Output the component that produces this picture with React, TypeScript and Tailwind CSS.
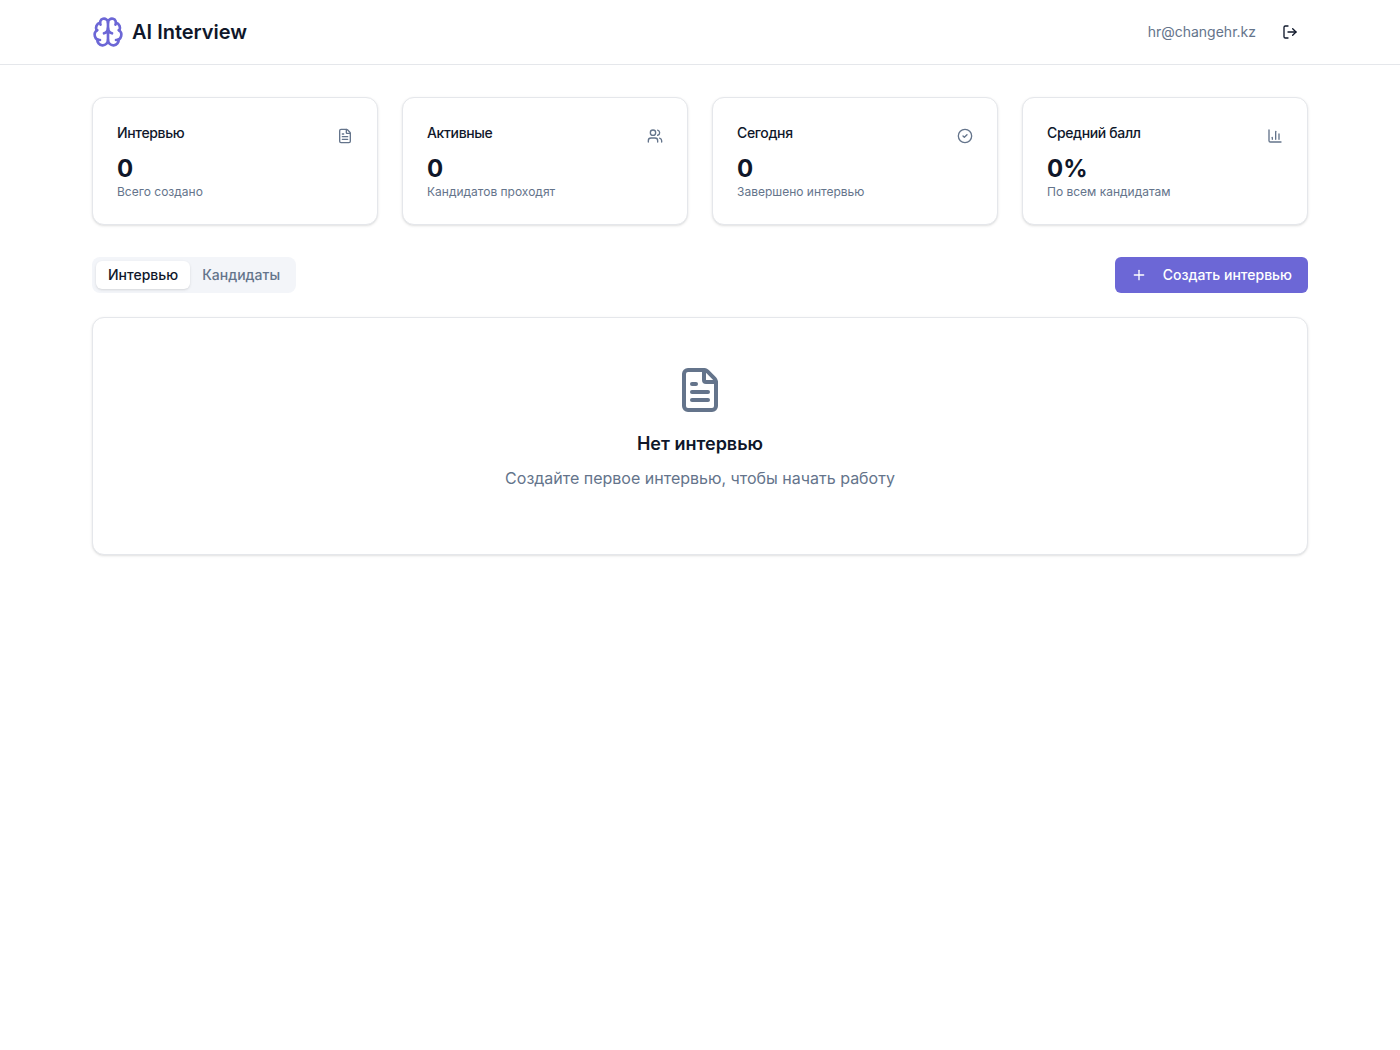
import { Brain, ChartColumn, CircleCheck, FileText, LogOut, Plus, Users } from "lucide-react"
import type { ReactNode } from "react"

interface StatProps { title: string; value: string; sub: string; icon: ReactNode }

function StatCard({ title, value, sub, icon }: StatProps) {
  return (
    <div className="h-[128px] rounded-xl border border-[#e5e7eb] bg-white px-6 pt-[25px] shadow-sm">
      <div className="flex items-start justify-between">
        <h3 className="text-sm leading-[20px] font-medium tracking-tight text-[#0f172a]">{title}</h3>
        <div className="mt-[5px]">{icon}</div>
      </div>
      <div className="mt-[11px] text-2xl leading-[28px] font-bold text-[#0f172a]">{value}</div>
      <p className="mt-px text-xs leading-[16px] text-[#64748b]">{sub}</p>
    </div>
  )
}

export default function App() {
  const ic = "h-4 w-4 text-[#64748b]"
  return (
    <div className="min-h-screen bg-white font-['Inter','Liberation_Sans',sans-serif] antialiased">
      <header className="border-b border-[#e5e7eb]">
        <div className="mx-auto flex h-16 max-w-7xl items-center justify-between px-8">
          <div className="flex items-center gap-2">
            <Brain className="h-8 w-8 text-[#6c67d6]" />
            <span className="text-xl font-semibold text-[#0f172a]">AI Interview</span>
          </div>
          <div className="flex items-center gap-4">
            <span className="text-sm text-[#64748b]">hr@changehr.kz</span>
            <button className="flex h-9 w-9 items-center justify-center text-[#0f172a]"><LogOut className="h-4 w-4" /></button>
          </div>
        </div>
      </header>
      <main className="mx-auto max-w-7xl px-8 py-8">
        <div className="grid grid-cols-4 gap-6">
          <StatCard title="Интервью" value="0" sub="Всего создано" icon={<FileText className={ic} />} />
          <StatCard title="Активные" value="0" sub="Кандидатов проходят" icon={<Users className={ic} />} />
          <StatCard title="Сегодня" value="0" sub="Завершено интервью" icon={<CircleCheck className={ic} />} />
          <StatCard title="Средний балл" value="0%" sub="По всем кандидатам" icon={<ChartColumn className={ic} />} />
        </div>
        <div className="mt-8 flex items-center justify-between">
          <div className="flex h-9 items-center rounded-lg bg-[#f3f5f9] p-1 text-sm font-medium">
            <div className="flex h-7 items-center rounded-md bg-white px-3 text-[#0f172a] shadow-sm">Интервью</div>
            <div className="flex h-7 items-center px-3 text-[#64748b]">Кандидаты</div>
          </div>
          <button className="flex h-9 items-center gap-4 rounded-md bg-[#6c67d6] px-4 text-sm font-medium text-white">
            <Plus className="h-4 w-4" />
            Создать интервью
          </button>
        </div>
        <div className="mt-6 flex h-[238px] flex-col items-center rounded-xl border border-[#e5e7eb] bg-white pt-12 shadow-sm">
          <FileText className="h-12 w-12 text-[#64748b]" />
          <h3 className="mt-4 text-lg leading-[28px] font-semibold text-[#0f172a]">Нет интервью</h3>
          <p className="mt-2 text-base leading-[24px] text-[#64748b]">Создайте первое интервью, чтобы начать работу</p>
        </div>
      </main>
    </div>
  )
}
